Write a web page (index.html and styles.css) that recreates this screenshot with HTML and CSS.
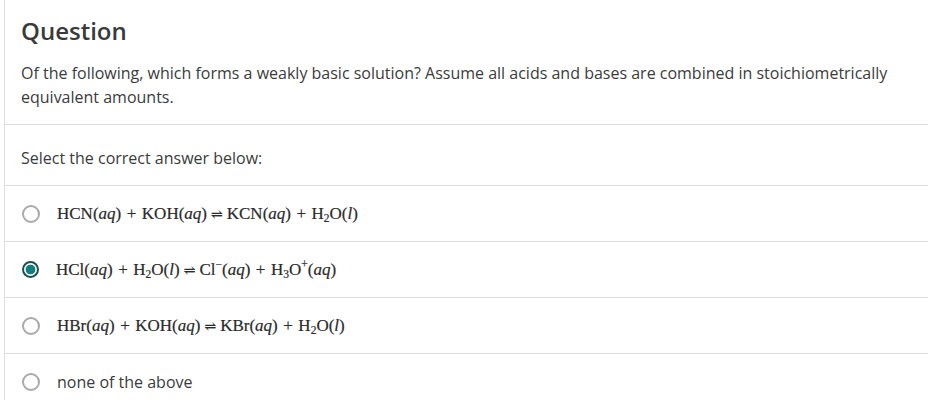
FILE: index.html
```html
<!DOCTYPE html>
<html>
<head>
<meta charset="utf-8">
<link rel="stylesheet" href="styles.css">
</head>
<body>
<div class="card">
  <section class="head">
    <h2 class="title">Question</h2>
    <p class="stem">Of the following, which forms a weakly basic solution? Assume all acids and bases are combined in stoichiometrically equivalent amounts.</p>
  </section>
  <section class="prompt">Select the correct answer below:</section>
  <ul class="options">
    <li class="option">
      <span class="radio"></span>
      <span class="math">HCN(<i>aq</i>)<span class="op">+</span>KOH(<i>aq</i>)<span class="rel">⇌</span>KCN(<i>aq</i>)<span class="op">+</span>H<sub>2</sub>O(<i>l</i>)</span>
    </li>
    <li class="option">
      <span class="radio checked"></span>
      <span class="math">HCl(<i>aq</i>)<span class="op">+</span>H<sub>2</sub>O(<i>l</i>)<span class="rel">⇌</span>Cl<sup>−</sup>(<i>aq</i>)<span class="op">+</span>H<sub>3</sub>O<sup>+</sup>(<i>aq</i>)</span>
    </li>
    <li class="option">
      <span class="radio"></span>
      <span class="math">HBr(<i>aq</i>)<span class="op">+</span>KOH(<i>aq</i>)<span class="rel">⇌</span>KBr(<i>aq</i>)<span class="op">+</span>H<sub>2</sub>O(<i>l</i>)</span>
    </li>
    <li class="option">
      <span class="radio"></span>
      <span class="text">none of the above</span>
    </li>
  </ul>
</div>
</body>
</html>
```
FILE: styles.css
```css
html, body {
  margin: 0;
  padding: 0;
  background: #ffffff;
}
body {
  padding-left: 4px;
  font-family: "Open Sans", "Liberation Sans", sans-serif;
  color: #3b3b3b;
}
.card {
  border-left: 1px solid #e0e0e0;
  min-height: 400px;
}
.head {
  padding: 16px 16px 15px 16px;
  border-bottom: 1px solid #dcdcdc;
}
.title {
  margin: 0;
  font-size: 24px;
  line-height: 30px;
  font-weight: 600;
  color: #3a3a3a;
}
.stem {
  margin: 15px 0 0 0;
  font-size: 16px;
  line-height: 24px;
}
.prompt {
  padding: 21px 16px 15px 16px;
  font-size: 16px;
  line-height: 24px;
  border-bottom: 1px solid #dcdcdc;
}
.options {
  list-style: none;
  margin: 0;
  padding: 0;
}
.option {
  display: flex;
  align-items: center;
  gap: 17px;
  height: 55px;
  padding: 0 16px;
  border-bottom: 1px solid #dcdcdc;
}
.option:last-child {
  border-bottom: none;
}
.radio {
  flex: none;
  width: 14px;
  height: 14px;
  border: 2px solid #a9a9a9;
  border-radius: 50%;
  margin-left: 1px;
  box-sizing: content-box;
}
.radio.checked {
  width: 13px;
  height: 13px;
  border: 2.5px solid #17514f;
  background: radial-gradient(circle, #0f7e7d 0 4.6px, #ffffff 5.2px);
}
.math {
  font-family: "Liberation Serif", "DejaVu Serif", serif;
  font-size: 17px;
  color: #2a2a2a;
  white-space: nowrap;
  -webkit-text-stroke: 0.2px #2a2a2a;
}
.math i {
  font-style: italic;
}
.math .op {
  padding: 0 5.5px;
}
.math .rel {
  padding: 0 4px;
  font-size: 14px;
}
.math sub, .math sup {
  font-size: 11.5px;
  line-height: 0;
}
.math sub {
  vertical-align: -3px;
}
.text {
  font-size: 16px;
  color: #3b3b3b;
}
```
